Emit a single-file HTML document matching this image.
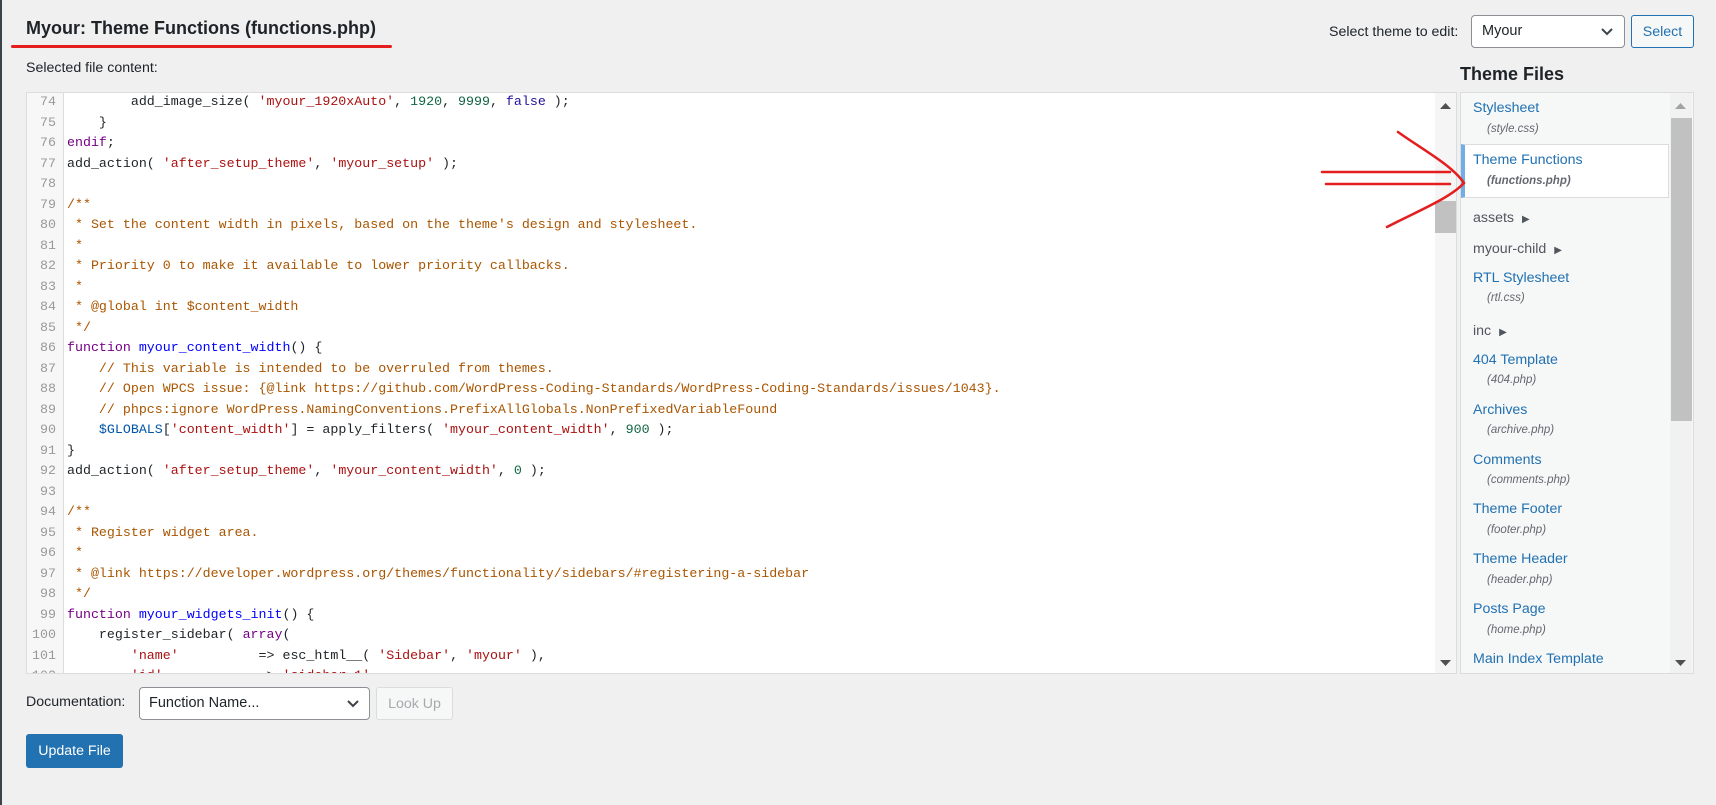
<!DOCTYPE html>
<html><head><meta charset="utf-8"><style>
html,body{margin:0;padding:0}
body{width:1716px;height:805px;background:#f0f0f1;position:relative;overflow:hidden;font-family:"Liberation Sans",sans-serif;color:#1d2327}
.abs{position:absolute}
#leftbar{left:0;top:0;width:2px;height:805px;background:#3c434a}
h1{position:absolute;left:26px;top:18px;margin:0;font-size:18px;font-weight:600;color:#1d2327;white-space:nowrap}
.lbl{font-size:14.2px;color:#1d2327;white-space:nowrap}
#editor{left:26px;top:92px;width:1431px;height:582px;background:#fff;border:1px solid #dcdcde;box-sizing:border-box;overflow:hidden}
#gutter{position:absolute;left:0;top:0;width:36px;height:100%;background:#f7f7f7;border-right:1px solid #ddd}
#code{position:absolute;left:0;top:-1px;font-family:"Liberation Mono",monospace;font-size:13.3px;line-height:20.5px}
#code div{height:20.5px;white-space:pre}
.n{display:inline-block;width:29px;text-align:right;color:#999;margin-right:11px}
.s{color:#a11}.k{color:#708}.c{color:#a50}.m{color:#164}.d{color:#00f}.v{color:#05a}.b{color:#219}
#vs{position:absolute;right:0;top:0;width:21px;height:100%;background:#f5f5f5}
#files{left:1460px;top:92px;width:234px;height:582px;background:#f6f7f7;border:1px solid #dcdcde;box-sizing:border-box;overflow:hidden}
.it{position:absolute;left:12px;font-size:14.2px;color:#2271b1;white-space:nowrap}
.sub{position:absolute;left:26px;font-size:11.5px;font-style:italic;color:#646970;white-space:nowrap}
.dir{position:absolute;left:12px;font-size:14.2px;color:#50575e;white-space:nowrap}
.sel{border:1px solid #c3c4c7;box-sizing:border-box;background:#fff}
.btn{border-radius:3px;box-sizing:border-box;font-size:14.2px;display:flex;align-items:center;justify-content:center}
</style></head><body>
<div id="leftbar" class="abs"></div>
<h1>Myour: Theme Functions (functions.php)</h1>
<div class="abs" style="left:11px;top:45px;width:381px;height:3px;background:#e41e1e;border-radius:2px"></div>
<div class="abs lbl" style="left:26px;top:60px">Selected file content:</div>

<div class="abs lbl" style="left:1329px;top:24px">Select theme to edit:</div>
<div class="abs sel" style="left:1471px;top:15px;width:154px;height:33px;border-color:#8c8f94;border-radius:4px"><span class="abs" style="left:10px;top:7px;font-size:14.5px">Myour</span>
<svg class="abs" style="left:128px;top:10px" width="14" height="12" viewBox="0 0 14 12"><path d="M2 3l5 5 5-5" stroke="#3c434a" stroke-width="2" fill="none"/></svg></div>
<div class="abs btn" style="left:1631px;top:15px;width:63px;height:33px;border:1px solid #2271b1;color:#2271b1;background:#f6f7f7">Select</div>
<div class="abs" style="left:1460px;top:64px;font-size:18px;font-weight:600;color:#1d2327">Theme Files</div>

<div id="editor" class="abs">
<div id="gutter"></div>
<div id="code"><div><span class="n">74</span>        add_image_size( <span class="s">'myour_1920xAuto'</span>, <span class="m">1920</span>, <span class="m">9999</span>, <span class="b">false</span> );</div><div><span class="n">75</span>    }</div><div><span class="n">76</span><span class="k">endif</span>;</div><div><span class="n">77</span>add_action( <span class="s">'after_setup_theme'</span>, <span class="s">'myour_setup'</span> );</div><div><span class="n">78</span></div><div><span class="n">79</span><span class="c">/**</span></div><div><span class="n">80</span><span class="c"> * Set the content width in pixels, based on the theme's design and stylesheet.</span></div><div><span class="n">81</span><span class="c"> *</span></div><div><span class="n">82</span><span class="c"> * Priority 0 to make it available to lower priority callbacks.</span></div><div><span class="n">83</span><span class="c"> *</span></div><div><span class="n">84</span><span class="c"> * @global int $content_width</span></div><div><span class="n">85</span><span class="c"> */</span></div><div><span class="n">86</span><span class="k">function</span> <span class="d">myour_content_width</span>() {</div><div><span class="n">87</span>    <span class="c">// This variable is intended to be overruled from themes.</span></div><div><span class="n">88</span>    <span class="c">// Open WPCS issue: {@link https://github.com/WordPress-Coding-Standards/WordPress-Coding-Standards/issues/1043}.</span></div><div><span class="n">89</span>    <span class="c">// phpcs:ignore WordPress.NamingConventions.PrefixAllGlobals.NonPrefixedVariableFound</span></div><div><span class="n">90</span>    <span class="v">$GLOBALS</span>[<span class="s">'content_width'</span>] = apply_filters( <span class="s">'myour_content_width'</span>, <span class="m">900</span> );</div><div><span class="n">91</span>}</div><div><span class="n">92</span>add_action( <span class="s">'after_setup_theme'</span>, <span class="s">'myour_content_width'</span>, <span class="m">0</span> );</div><div><span class="n">93</span></div><div><span class="n">94</span><span class="c">/**</span></div><div><span class="n">95</span><span class="c"> * Register widget area.</span></div><div><span class="n">96</span><span class="c"> *</span></div><div><span class="n">97</span><span class="c"> * @link https://developer.wordpress.org/themes/functionality/sidebars/#registering-a-sidebar</span></div><div><span class="n">98</span><span class="c"> */</span></div><div><span class="n">99</span><span class="k">function</span> <span class="d">myour_widgets_init</span>() {</div><div><span class="n">100</span>    register_sidebar( <span class="k">array</span>(</div><div><span class="n">101</span>        <span class="s">'name'</span>          =&gt; esc_html__( <span class="s">'Sidebar'</span>, <span class="s">'myour'</span> ),</div><div><span class="n">102</span>        <span class="s">'id'</span>            =&gt; <span class="s">'sidebar-1'</span>,</div></div>
<div id="vs">
<svg class="abs" style="left:5px;top:10px" width="11" height="7"><path d="M0 6L5.5 0 11 6z" fill="#505050"/></svg>
<div class="abs" style="left:0;top:108px;width:21px;height:32px;background:#c1c1c1"></div>
<svg class="abs" style="left:5px;top:567px" width="11" height="7"><path d="M0 0L5.5 6 11 0z" fill="#505050"/></svg>
</div>
</div>

<div id="files" class="abs">
<div class="it" style="top:7px">Stylesheet</div>
<div class="sub" style="top:30px">(style.css)</div>
<div class="abs" style="left:0;top:51px;width:208px;height:54px;background:#fff;border:1px solid #dcdcde;border-left:4px solid #72aee6;box-sizing:border-box"></div>
<div class="it" style="top:59px">Theme Functions</div>
<div class="sub" style="top:82px;font-weight:600">(functions.php)</div>
<div class="dir" style="top:117px">assets <span style="font-size:10px;margin-left:4px">&#9654;</span></div>
<div class="dir" style="top:148px">myour-child <span style="font-size:10px;margin-left:4px">&#9654;</span></div>
<div class="it" style="top:177px">RTL Stylesheet</div>
<div class="sub" style="top:199px">(rtl.css)</div>
<div class="dir" style="top:230px">inc <span style="font-size:10px;margin-left:4px">&#9654;</span></div>
<div class="it" style="top:259px">404 Template</div>
<div class="sub" style="top:281px">(404.php)</div>
<div class="it" style="top:309px">Archives</div>
<div class="sub" style="top:331px">(archive.php)</div>
<div class="it" style="top:359px">Comments</div>
<div class="sub" style="top:381px">(comments.php)</div>
<div class="it" style="top:408px">Theme Footer</div>
<div class="sub" style="top:431px">(footer.php)</div>
<div class="it" style="top:458px">Theme Header</div>
<div class="sub" style="top:481px">(header.php)</div>
<div class="it" style="top:508px">Posts Page</div>
<div class="sub" style="top:531px">(home.php)</div>
<div class="it" style="top:558px">Main Index Template</div>
<div class="abs" style="left:209px;top:0;width:22px;height:582px;background:#f1f1f1">
<svg class="abs" style="left:5px;top:10px" width="11" height="7"><path d="M0 6L5.5 0 11 6z" fill="#a3a3a3"/></svg>
<div class="abs" style="left:1px;top:25px;width:21px;height:303px;background:#c1c1c1"></div>
<svg class="abs" style="left:5px;top:567px" width="11" height="7"><path d="M0 0L5.5 6 11 0z" fill="#505050"/></svg>
</div>
</div>

<svg class="abs" style="left:0;top:0" width="1716" height="805">
<path d="M1322 172L1450 172M1326 184L1450 184" stroke="#e41e1e" stroke-width="2.5" stroke-linecap="round"/>
<path d="M1398 132C1420 148 1452 165 1464 183C1450 198 1420 210 1387 227" stroke="#e41e1e" stroke-width="2.5" fill="none" stroke-linecap="round"/>
</svg>

<div class="abs lbl" style="left:26px;top:694px">Documentation:</div>
<div class="abs sel" style="left:139px;top:687px;width:231px;height:33px;border-color:#8c8f94;border-radius:4px"><span class="abs" style="left:9px;top:7px;font-size:14.5px">Function Name...</span>
<svg class="abs" style="left:206px;top:10px" width="14" height="12" viewBox="0 0 14 12"><path d="M2 3l5 5 5-5" stroke="#3c434a" stroke-width="2" fill="none"/></svg></div>
<div class="abs btn" style="left:376px;top:687px;width:77px;height:33px;border:1px solid #dcdcde;color:#a7aaad;background:#f6f7f7">Look Up</div>
<div class="abs btn" style="left:26px;top:734px;width:97px;height:34px;background:#2271b1;color:#fff">Update File</div>
</body></html>
